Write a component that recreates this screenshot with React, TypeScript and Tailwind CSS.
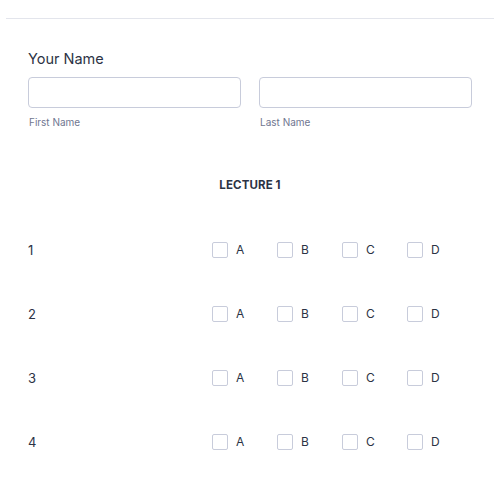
import React from 'react';

const questions = [1, 2, 3, 4];
const options = ['A', 'B', 'C', 'D'];

export default function App() {
  return (
    <div className="w-[500px] h-[484px] bg-white overflow-hidden text-[#2c3345]" style={{ fontFamily: 'Inter, "Noto Sans", sans-serif' }}>
      <div className="pt-[18px] px-[6px]">
        <div className="border-t border-[#e3e5ec]" />
      </div>

      {/* name field */}
      <div className="px-[28px] pt-[30px]">
        <div className="text-[14.5px] font-normal leading-[20px]">Your Name</div>
        <div className="flex gap-[18px] mt-[8px]">
          <div className="flex-1">
            <input className="w-full h-[31px] border border-[#c8ccdb] rounded-[4px] outline-none" />
            <div className="text-[10px] text-[#6f7690] mt-[7px] pl-[1px] leading-[14px]">First Name</div>
          </div>
          <div className="flex-1">
            <input className="w-full h-[31px] border border-[#c8ccdb] rounded-[4px] outline-none" />
            <div className="text-[10px] text-[#6f7690] mt-[7px] pl-[1px] leading-[14px]">Last Name</div>
          </div>
        </div>
      </div>

      {/* lecture heading */}
      <div className="text-center text-[11.5px] font-bold tracking-[0.01em] mt-[48px] leading-[16px]">LECTURE 1</div>

      {/* answer grid */}
      <div className="px-[28px] mt-[25px]">
        {questions.map((q) => (
          <div key={q} className="flex items-center h-[64px]">
            <div className="w-[184px] text-[13px] leading-[16px]">{q}</div>
            <div className="flex">
              {options.map((o) => (
                <label key={o} className="w-[65px] flex items-center gap-[8px]">
                  <span className="w-[16px] h-[16px] border border-[#c8ccdb] rounded-[2px] bg-white" />
                  <span className="text-[12px] leading-[16px]">{o}</span>
                </label>
              ))}
            </div>
          </div>
        ))}
      </div>
    </div>
  );
}
